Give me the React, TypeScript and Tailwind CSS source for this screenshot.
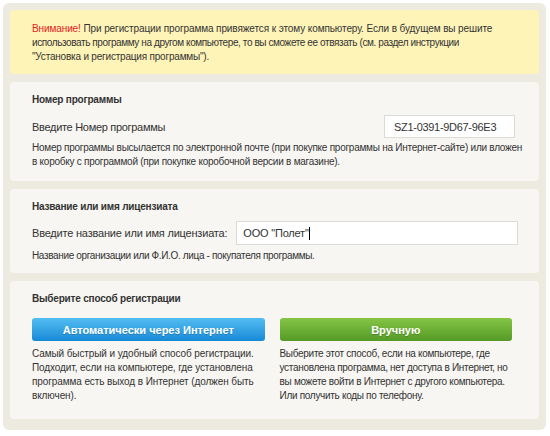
export default function App() {
  return (
    <div className="w-[550px] h-[436px] bg-white pt-[3px] pl-[3px] font-['Liberation_Sans',Arial,sans-serif] text-[10px] leading-[14px] text-[#333] whitespace-nowrap">
      <div className="w-[543px] h-[427px] rounded-[6px] bg-[#edeadf] p-[7px] flex flex-col gap-[8px]">
        <div className="h-[64px] rounded-[4px] bg-[#fff4b8] pl-[22px] pt-[12px]">
          <p>
            <span className="block tracking-[-0.1px]">
              <span className="text-[#e8201a]">Внимание!</span> При регистрации программа привяжется к этому компьютеру. Если в будущем вы решите
            </span>
            <span className="block tracking-[-0.4px]">
              использовать программу на другом компьютере, то вы сможете ее отвязать (см. раздел инструкции
            </span>
            <span className="block tracking-[-0.2px]">"Установка и регистрация программы").</span>
          </p>
        </div>

        <div className="h-[99px] rounded-[4px] bg-[#f7f6f2] pl-[22px] pr-[24px] pt-[11px]">
          <h3 className="font-bold tracking-[-0.2px]">Номер программы</h3>
          <div className="mt-[8px] flex items-center justify-between">
            <span className="text-[11px] tracking-[-0.3px]">Введите Номер программы</span>
            <div className="w-[131px] h-[23px] border border-[#dcdcd6] bg-white pl-[9px] flex items-center text-[11px] tracking-[-0.3px]">
              SZ1-0391-9D67-96E3
            </div>
          </div>
          <p className="mt-[3px] tracking-[-0.25px]">
            Номер программы высылается по электронной почте (при покупке программы на Интернет-сайте) или вложен
            <br />
            в коробку с программой (при покупке коробочной версии в магазине).
          </p>
        </div>

        <div className="h-[84px] rounded-[4px] bg-[#f7f6f2] pl-[22px] pr-[21px] pt-[11px]">
          <h3 className="font-bold tracking-[-0.2px]">Название или имя лицензиата</h3>
          <div className="mt-[7px] flex items-center gap-[9px]">
            <span className="text-[11px] tracking-[-0.2px]">Введите название или имя лицензиата:</span>
            <div className="flex-1 h-[24px] border border-[#dcdcd6] bg-white pl-[6px] flex items-center text-[11px] tracking-[-0.2px]">
              ООО "Полет"
              <span className="inline-block w-px h-[13px] bg-black"></span>
            </div>
          </div>
          <p className="mt-[4px] tracking-[-0.35px]">Название организации или Ф.И.О. лица - покупателя программы.</p>
        </div>

        <div className="h-[138px] rounded-[4px] bg-[#f7f6f2] pl-[22px] pr-[27px] pt-[11px]">
          <h3 className="font-bold tracking-[-0.2px]">Выберите способ регистрации</h3>
          <div className="mt-[12px] grid grid-cols-2 gap-[15px]">
            <div>
              <button className="w-full h-[23px] rounded-[3px] bg-gradient-to-b from-[#52bdf2] to-[#1489d6] text-white font-bold text-[11px] [text-shadow:0_1px_0_rgba(0,0,0,0.2)]">
                Автоматически через Интернет
              </button>
              <p className="mt-[6px] tracking-[-0.1px]">
                Самый быстрый и удобный способ регистрации.
                <br />
                Подходит, если на компьютере, где установлена
                <br />
                программа есть выход в Интернет (должен быть
                <br />
                включен).
              </p>
            </div>
            <div>
              <button className="w-full h-[23px] rounded-[3px] bg-gradient-to-b from-[#84c545] to-[#559a27] text-white font-bold text-[11px] [text-shadow:0_1px_0_rgba(0,0,0,0.2)]">
                Вручную
              </button>
              <p className="mt-[6px] tracking-[-0.3px]">
                Выберите этот способ, если на компьютере, где
                <br />
                установлена программа, нет доступа в Интернет, но
                <br />
                вы можете войти в Интернет с другого компьютера.
                <br />
                Или получить коды по телефону.
              </p>
            </div>
          </div>
        </div>
      </div>
    </div>
  );
}
